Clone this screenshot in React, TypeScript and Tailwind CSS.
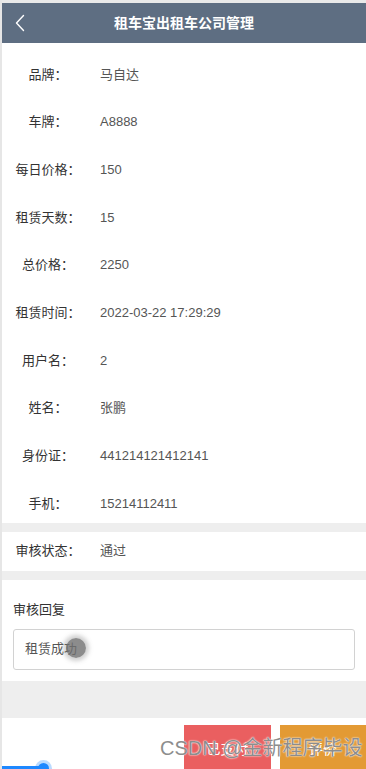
import React from 'react';

interface Field {
  label: string;
  value: string;
}

const fields: Field[] = [
  { label: '品牌：', value: '马自达' },
  { label: '车牌：', value: 'A8888' },
  { label: '每日价格：', value: '150' },
  { label: '租赁天数：', value: '15' },
  { label: '总价格：', value: '2250' },
  { label: '租赁时间：', value: '2022-03-22 17:29:29' },
  { label: '用户名：', value: '2' },
  { label: '姓名：', value: '张鹏' },
  { label: '身份证：', value: '441214121412141' },
  { label: '手机：', value: '15214112411' },
];

const font = { fontFamily: '"Liberation Sans", "Noto Sans CJK SC", sans-serif' };

const App = () => {
  return (
    <div className="relative h-[769px] w-[366px] overflow-hidden bg-white border-l-2 border-[#e6e6e6]" style={font}>
      <div className="h-[3px] bg-[#e9e9e9]"></div>

      {/* 顶部导航 */}
      <div className="relative flex h-10 items-center justify-center bg-[#5e6e82]">
        <svg className="absolute left-[12px] top-[11px]" width="12" height="18" viewBox="0 0 12 18" fill="none">
          <path d="M9.5 1.5 L2.5 9 L9.5 16.5" stroke="white" strokeWidth="1.4" strokeLinecap="round" strokeLinejoin="round" />
        </svg>
        <h1 className="text-[14px] font-bold leading-5 text-white">租车宝出租车公司管理</h1>
      </div>

      {/* 订单信息 */}
      <div className="pb-[3px]">
        {fields.map((f) => (
          <div key={f.label} className="flex h-[47.67px] items-center pt-4 text-[13px]">
            <span className="ml-[10px] w-[72px] text-center leading-5 text-[#333]">{f.label}</span>
            <span className="ml-[16px] leading-5 text-[#555]">{f.value}</span>
          </div>
        ))}
      </div>

      <div className="h-[9px] bg-[#eeeeee]"></div>

      <div className="flex h-[39px] items-center text-[13px]">
        <span className="ml-[10px] w-[72px] text-center leading-5 text-[#333]">审核状态：</span>
        <span className="ml-[16px] leading-5 text-[#555]">通过</span>
      </div>

      <div className="h-[9px] bg-[#eeeeee]"></div>

      {/* 审核回复 */}
      <div className="px-[11px] pt-5 pb-[11px]">
        <p className="text-[13px] leading-5 text-[#333]">审核回复</p>
        <div className="mt-[9px] flex h-[41px] items-center rounded-[3px] border border-[#d2d2d2] px-[11px] text-[13px] text-[#555]">
          租赁成功
        </div>
      </div>

      <div className="h-[37px] bg-[#eeeeee]"></div>

      {/* 底部按钮 */}
      <div className="flex justify-end gap-[9px] pt-[7px]">
        <button className="h-[50px] w-[87px] bg-[#ea5f60] text-[14px] text-white">已支付</button>
        <button className="h-[50px] w-[86px] bg-[#e39a34] text-[14px] text-white">评价</button>
      </div>

      {/* 触摸指示 */}
      <div className="absolute left-[64px] top-[638px] h-[20px] w-[20px] rounded-full bg-[#6f6f6f]/80 shadow-[0_0_4px_3px_rgba(120,120,120,0.35)]"></div>

      {/* 水印 */}
      <div
        className="absolute left-[158px] top-[736px] whitespace-nowrap text-[20px] leading-6 text-[#8d8d8d]"
        style={{ textShadow: '0 0 1px #fff, 0 0 2px #fff' }}
      >
        CSDN @金新程序毕设
      </div>

      {/* 播放进度 */}
      <div className="absolute bottom-0 left-0 h-[3px] w-[42px] bg-[#1e88ff]"></div>
      <div className="absolute bottom-[-5px] left-[36px] h-[11px] w-[11px] rounded-full bg-[#1e88ff] shadow-[0_0_0_3px_rgba(30,136,255,0.3)]"></div>
    </div>
  );
};

export default App;
